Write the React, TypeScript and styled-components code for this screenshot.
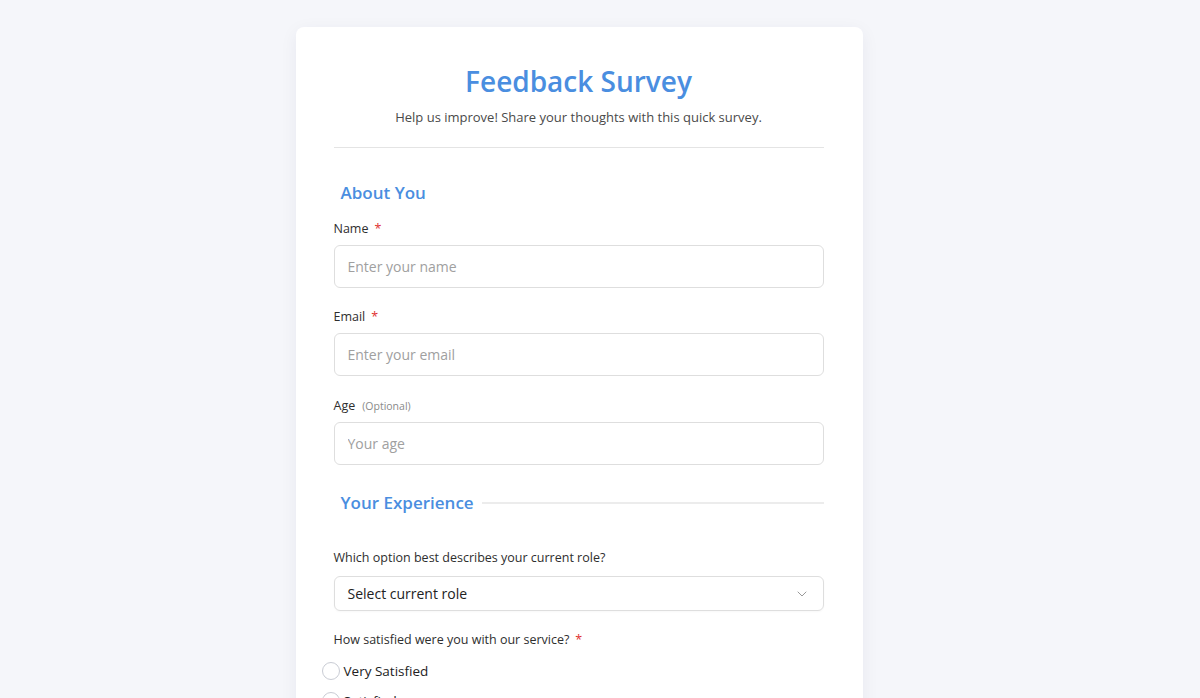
import { createGlobalStyle, styled } from "styled-components";
import { LuChevronDown } from "react-icons/lu";

const GlobalStyle = createGlobalStyle`
	* {
		box-sizing: border-box;
	}

	body {
		margin: 0;
		background: #f5f6fa;
		font-family: "Open Sans", "Noto Sans", sans-serif;
		color: #333;
	}
`;

const Page = styled.div`
	display: flex;
	justify-content: center;
	padding-top: 27px;
	padding-right: 42px;
	height: 698px;
	overflow: hidden;
`;

const Card = styled.form`
	width: 567px;
	background: #ffffff;
	border-radius: 8px;
	box-shadow: 0 4px 18px rgba(30, 40, 80, 0.06);
	padding: 34px 39px 40px 38px;
	align-self: flex-start;
`;

const Header = styled.header`
	text-align: center;
	padding-bottom: 21px;
	border-bottom: 1.5px solid #e4e4e4;
`;

const Title = styled.h1`
	margin: 0;
	font-size: 28px;
	font-weight: 600;
	color: #4a8ee0;
	line-height: 40px;
`;

const Subtitle = styled.p`
	margin: 7px 0 0;
	font-size: 13px;
	color: #4a4a4a;
`;

const SectionTitle = styled.h2<{ $ruled?: boolean }>`
	display: flex;
	align-items: center;
	gap: 8px;
	margin: 0;
	padding-left: 7px;
	font-size: 17px;
	font-weight: 600;
	color: #4a8ee0;
	line-height: 24px;

	&::after {
		content: "";
		flex: 1;
		height: 2px;
		background: #ececec;
		display: ${(p) => (p.$ruled ? "block" : "none")};
	}
`;

const Section = styled.section<{ $top: number }>`
	margin-top: ${(p) => p.$top}px;
`;

const Field = styled.div<{ $top: number }>`
	display: flex;
	flex-direction: column;
	margin-top: ${(p) => p.$top}px;
`;

const Label = styled.label<{ $gap?: number }>`
	font-size: 12.5px;
	font-weight: 500;
	color: #2e2e2e;
	line-height: 18px;
	margin-bottom: ${(p) => p.$gap ?? 8}px;
`;

const Required = styled.span`
	color: #e03131;
	margin-left: 6px;
`;

const Optional = styled.span`
	font-size: 10.5px;
	color: #8a8a8a;
	margin-left: 7px;
`;

const Input = styled.input`
	height: 43px;
	width: 100%;
	border: 1px solid #dedede;
	border-radius: 6px;
	padding: 0 13px;
	font-family: inherit;
	font-size: 14px;
	color: #333;
	outline: none;

	&::placeholder {
		color: #a0a0a0;
	}
`;

const SelectBox = styled.div`
	display: flex;
	align-items: center;
	justify-content: space-between;
	height: 35px;
	border: 1px solid #dedede;
	border-radius: 6px;
	padding: 0 13px;
	font-size: 14px;
	color: #222;
	box-shadow: 0 1px 2px rgba(0, 0, 0, 0.03);

	svg {
		color: #9a9a9a;
	}
`;

const RadioList = styled.div`
	display: flex;
	flex-direction: column;
	gap: 12px;
	margin-left: -12px;
`;

const RadioRow = styled.label`
	display: flex;
	align-items: center;
	gap: 4px;
	font-size: 13.5px;
	color: #222;
	line-height: 18px;
`;

const RadioDot = styled.span`
	width: 18px;
	height: 18px;
	border-radius: 50%;
	border: 1.5px solid #c9ccd4;
	background: #fff;
`;

const App = () => {
	return (
		<>
			<GlobalStyle />
			<Page>
				<Card>
					<Header>
						<Title>Feedback Survey</Title>
						<Subtitle>Help us improve! Share your thoughts with this quick survey.</Subtitle>
					</Header>

					<Section $top={33}>
						<SectionTitle>About You</SectionTitle>
						<Field $top={15}>
							<Label $gap={7}>
								Name<Required>*</Required>
							</Label>
							<Input placeholder="Enter your name" />
						</Field>
						<Field $top={20}>
							<Label $gap={7}>
								Email<Required>*</Required>
							</Label>
							<Input placeholder="Enter your email" />
						</Field>
						<Field $top={21}>
							<Label $gap={7}>
								Age<Optional>(Optional)</Optional>
							</Label>
							<Input placeholder="Your age" />
						</Field>
					</Section>

					<Section $top={26}>
						<SectionTitle $ruled>Your Experience</SectionTitle>
						<Field $top={34}>
							<Label $gap={9}>Which option best describes your current role?</Label>
							<SelectBox>
								Select current role
								<LuChevronDown size={16} strokeWidth={1.5} />
							</SelectBox>
						</Field>
						<Field $top={20}>
							<Label $gap={13}>
								How satisfied were you with our service?<Required>*</Required>
							</Label>
							<RadioList>
								<RadioRow>
									<RadioDot />
									Very Satisfied
								</RadioRow>
								<RadioRow>
									<RadioDot />
									Satisfied
								</RadioRow>
							</RadioList>
						</Field>
					</Section>
				</Card>
			</Page>
		</>
	);
};

export default App;
